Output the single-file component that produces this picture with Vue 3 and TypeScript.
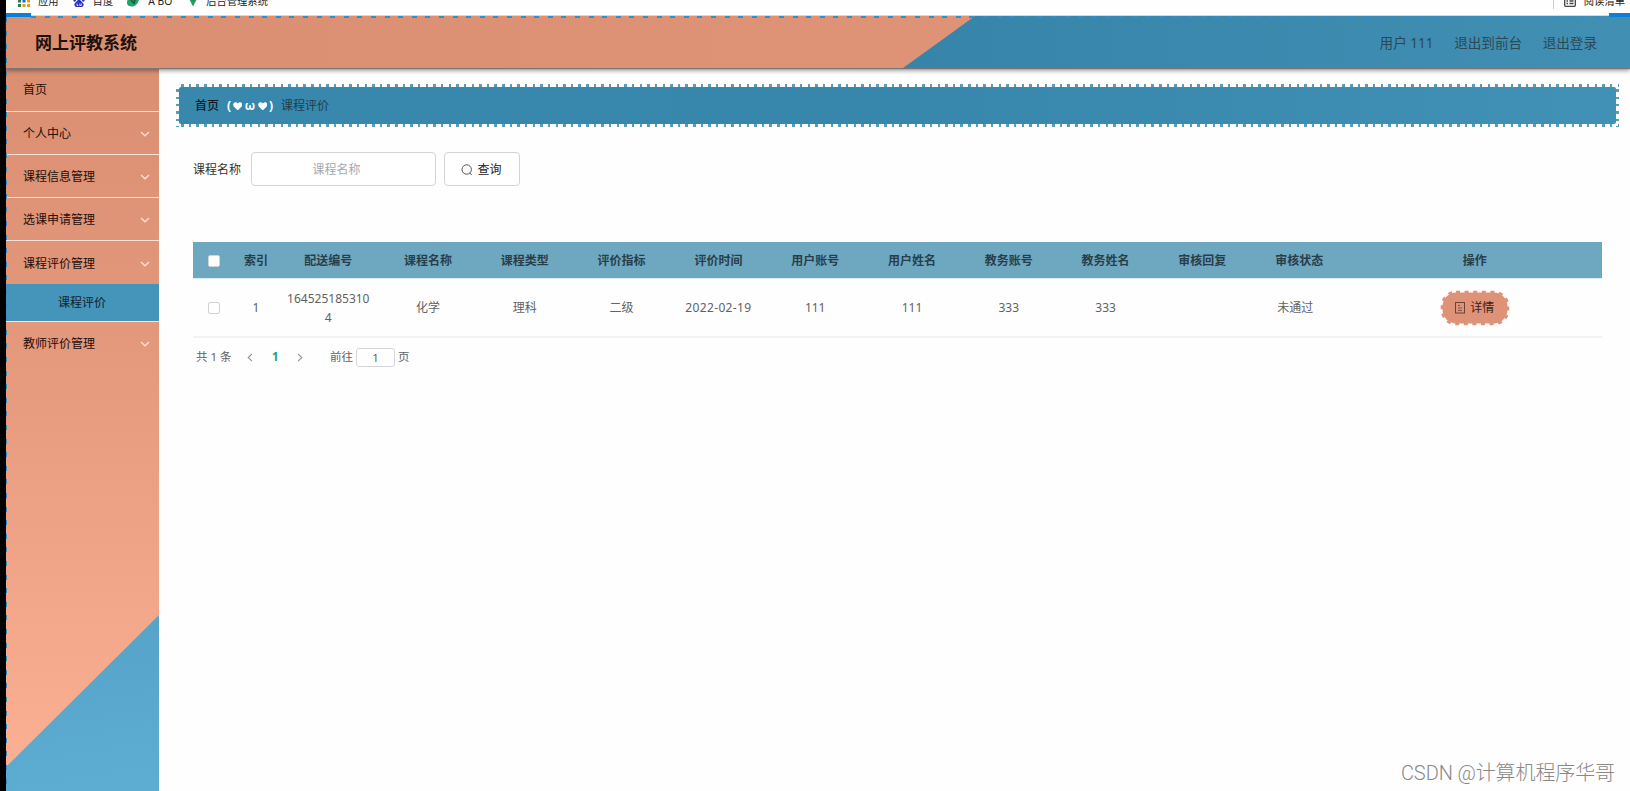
<script setup lang="ts">
interface MenuItem { label: string; expandable: boolean; child?: string }

const menu: MenuItem[] = [
  { label: '首页', expandable: false },
  { label: '个人中心', expandable: true },
  { label: '课程信息管理', expandable: true },
  { label: '选课申请管理', expandable: true },
  { label: '课程评价管理', expandable: true, child: '课程评价' },
  { label: '教师评价管理', expandable: true },
]

const columns: string[] = [
  '索引', '配送编号', '课程名称', '课程类型', '评价指标', '评价时间', '用户账号',
  '用户姓名', '教务账号', '教务姓名', '审核回复', '审核状态', '操作',
]

const rows: string[][] = [
  ['1', '1645251853104', '化学', '理科', '二级', '2022-02-19', '111', '111', '333', '333', '', '未通过'],
]
</script>

<template>
  <div class="screen">
    <div class="edge"></div>
    <div class="window">
      <div class="bookmarks">
        <span class="mark m1">
          <svg width="12" height="12" viewBox="0 0 12 12">
            <g fill="#2f7d4a"><rect x="0" y="0" width="3" height="3" /><rect x="0" y="4.5" width="3" height="3" /></g>
            <g fill="#2266c8"><rect x="4.5" y="4.5" width="3" height="3" /><rect x="4.5" y="0" width="3" height="3" /></g>
            <g fill="#d9a21b"><rect x="9" y="0" width="3" height="3" /><rect x="9" y="4.5" width="3" height="3" /><rect x="4.5" y="9" width="3" height="3" /><rect x="9" y="9" width="3" height="3" /></g>
            <rect x="0" y="9" width="3" height="3" fill="#2f7d4a" />
          </svg>应用
        </span>
        <span class="mark m2">
          <svg width="12" height="12" viewBox="0 0 12 12" fill="#2b2fc4">
            <ellipse cx="1.7" cy="5" rx="1.4" ry="1.8" /><ellipse cx="4.2" cy="2" rx="1.3" ry="1.8" />
            <ellipse cx="7.8" cy="2" rx="1.3" ry="1.8" /><ellipse cx="10.3" cy="5" rx="1.4" ry="1.8" />
            <path d="M6 4.6C4 5 3.500 7 1.800 8.200C.8 9.500 1.500 12 3.500 12H8.500C10.500 12 11.200 9.500 10.200 8.200C8.500 7 8 5 6 4.600Z" />
            <path d="M4 8.500V10.500H5.300M6.800 8.500V10.500H8.300V8.500" fill="none" stroke="#fff" stroke-width=".8" />
          </svg>百度
        </span>
        <span class="mark m3">
          <svg width="13" height="12" viewBox="0 0 13 12">
            <path d="M0 8C0 2 5 0 12 0C13 7 9 12 4 11.500C1.500 11.200 0 10 0 8Z" fill="#26a269" />
            <path d="M4 5L7 8L8.500 3" fill="none" stroke="#165c3c" stroke-width="1.500" />
          </svg>A BO
        </span>
        <span class="mark m4">
          <svg width="12" height="12" viewBox="0 0 12 12">
            <path d="M1 2L6 11.500L11 2Z" fill="#2a9d60" /><path d="M4 2L6 6L8 2Z" fill="#2f5366" />
          </svg>后台管理系统
        </span>
        <span class="mark reading">
          <svg width="12" height="12" viewBox="0 0 12 12" fill="none" stroke="#444" stroke-width="1.300">
            <rect x=".7" y=".7" width="10.600" height="10.600" rx="1" />
            <path d="M2.500 3.500H4M5.500 3.500H9.500M2.500 6H4M5.500 6H9.500M2.500 8.500H4M5.500 8.500H9.500" />
          </svg>阅读清单
        </span>
      </div>

      <header class="topbar">
        <h1>网上评教系统</h1>
        <nav><span>用户 111</span><span>退出到前台</span><span>退出登录</span></nav>
      </header>

      <div class="body">
        <aside>
          <template v-for="item in menu" :key="item.label">
            <div class="item" :class="{ open: item.child }">
              <span>{{ item.label }}</span>
              <svg v-if="item.expandable" width="10" height="6" viewBox="0 0 10 6" fill="none" stroke="#f6e3dc" stroke-width="1.200">
                <path d="M1 1L5 4.800L9 1" />
              </svg>
            </div>
            <div v-if="item.child" class="child">{{ item.child }}</div>
          </template>
        </aside>

        <main>
          <div class="crumb">
            <div class="crumb-in">
              <b>首页</b>
              <span class="face">(<svg viewBox="0 0 10 9"><path d="M5 9L.8 4.800C-1.200 2.300 1.800-1.600 5 1.500C8.200-1.600 11.200 2.300 9.200 4.800Z" /></svg><i>ω</i><svg viewBox="0 0 10 9"><path d="M5 9L.8 4.800C-1.200 2.300 1.800-1.600 5 1.500C8.200-1.600 11.200 2.300 9.200 4.800Z" /></svg>)</span>
              <span class="here">课程评价</span>
            </div>
          </div>

          <form class="search" @submit.prevent>
            <label>课程名称</label>
            <input type="text" placeholder="课程名称" />
            <button type="submit">
              <svg width="12" height="12" viewBox="0 0 12 12" fill="none" stroke="#555" stroke-width="1">
                <circle cx="5.700" cy="5.500" r="4.700" /><path d="M8.800 8.900L10.800 11" />
              </svg>查询
            </button>
          </form>

          <section class="table">
            <div class="row head">
              <div><span class="check"></span></div>
              <div v-for="c in columns" :key="c">{{ c }}</div>
            </div>
            <div v-for="r in rows" :key="r[1]" class="row data">
              <div><span class="check"></span></div>
              <div v-for="(v, i) in r" :key="i" :class="{ date: i === 5, status: i === 11 }">{{ v }}</div>
              <div>
                <button class="detail">
                  <svg class="scallop" width="70" height="36" viewBox="0 0 70 36">
                    <rect x="2.500" y="2.500" width="65" height="31" rx="14" fill="#de9378" />
                    <rect x="2" y="2" width="66" height="32" rx="14" fill="none" stroke="#de9378" stroke-width="2.600" stroke-dasharray="4 4.610" />
                  </svg>
                  <svg class="doc" width="10" height="12" viewBox="0 0 10 12" fill="none" stroke="#6b4236" stroke-width="1">
                    <rect x=".5" y=".5" width="9" height="10.500" /><path d="M3 3.500H5M3 6H7M3 8.500H7" stroke-width=".8" />
                  </svg>
                  <span>详情</span>
                </button>
              </div>
            </div>
          </section>

          <div class="pager">
            <span class="total">共 1 条</span>
            <svg width="6" height="9" viewBox="0 0 6 9"><path d="M5 .8L1.200 4.500L5 8.200" /></svg>
            <b>1</b>
            <svg width="6" height="9" viewBox="0 0 6 9"><path d="M1 .8L4.800 4.500L1 8.200" /></svg>
            <span class="goto">前往</span>
            <span class="page">1</span>
            <span>页</span>
          </div>
        </main>
      </div>
    </div>

    <div class="dash-top"></div>
    <div class="dash-left"></div>
    <div class="tab tab-left"></div>
    <div class="tab tab-right"></div>
    <div class="watermark">CSDN @计算机程序华哥</div>
  </div>
</template>

<style>
body { margin: 0; background: #fefefe; }
</style>

<style scoped>
* { box-sizing: border-box; }
.screen {
  position: relative; display: flex; width: 1630px; height: 791px; overflow: hidden;
  background: #fefefe; color: #222; font: 12px/16px "Noto Sans", "Noto Sans CJK SC", sans-serif;
}
.edge { flex: 0 0 6px; background: #000; }
.window { flex: 1; min-width: 0; display: flex; flex-direction: column; }
.bookmarks {
  flex: 0 0 16px; height: 16px; display: flex; align-items: flex-start; overflow: hidden;
  padding-left: 12px; font-size: 10.300px; color: #222; border-bottom: 1px solid #ddd;
}
.mark { display: flex; align-items: center; gap: 8px; height: 16px; margin-top: -7px; white-space: nowrap; }
.m2 { margin-left: 14px; }
.m3 { margin-left: 14px; }
.m4 { margin-left: 15px; gap: 7px; }
.reading { margin-left: auto; padding-left: 10px; margin-right: 5px; border-left: 1px solid #ccc; }

.topbar {
  position: relative; z-index: 1; flex: 0 0 52px; display: flex; align-items: center; justify-content: space-between;
  padding: 2px 33px 0 29px;
  background: linear-gradient(90deg, #da8f73, #de9377 55%);
  box-shadow: 0 1px 1px #777, 0 3px 4px rgba(0, 0, 0, .35);
}
.topbar::before {
  content: ''; position: absolute; z-index: -1; inset: 0;
  background: linear-gradient(90deg, #3684a9 55%, #4190b4 100%);
  clip-path: polygon(969px 0, 100% 0, 100% 100%, 897px 100%);
}
h1 { margin: 0; font-size: 17px; line-height: 24px; color: #20110d; }
nav { display: flex; gap: 20.500px; font-size: 13.600px; color: #2c4856; }

.body { flex: 1; display: flex; min-height: 0; }
aside {
  flex: 0 0 153px; position: relative; z-index: 0;
  background: linear-gradient(to bottom, #da8f73 0, #e3977b 36%, #fcb094 100%);
}
aside::after {
  content: ''; position: absolute; z-index: -1; inset: 547px 0 0 0;
  background: linear-gradient(170deg, #56a2c8, #5dadd2);
  clip-path: polygon(100% 0, 100% 100%, 0 100%, 0 152px);
}
.item {
  height: 43px; padding: 2px 9px 0 17px; display: flex; align-items: center; justify-content: space-between;
  border-bottom: 1px solid #f6e2da; color: #1e0f0b;
}
.item:first-child { height: 44px; padding-top: 0; }
.item.open { border: 0; }
.item:last-child { border: 0; padding-top: 0; }
.child {
  height: 38px; display: flex; align-items: center; justify-content: center; padding: 1px 1px 0 0;
  background: #4594b9; color: #10222b; border-bottom: 1px solid #f0e6e2;
}

main { flex: 1; min-width: 0; padding: 16px 11px 0 17px; }
.crumb {
  height: 43px; padding: 3px;
  background:
    repeating-linear-gradient(90deg, transparent 0 5.200px, #5b9bb4 5.200px 7.640px) 0 0 / 100% 3px no-repeat,
    repeating-linear-gradient(90deg, transparent 0 5.200px, #5b9bb4 5.200px 7.640px) 0 100% / 100% 3px no-repeat,
    repeating-linear-gradient(180deg, transparent 0 5px, #5b9bb4 5px 7.500px) 0 0 / 3px 100% no-repeat,
    repeating-linear-gradient(180deg, transparent 0 5px, #5b9bb4 5px 7.500px) 100% 0 / 3px 100% no-repeat;
}
.crumb-in {
  height: 37px; display: flex; align-items: center; padding: 1px 0 0 16px; border-radius: 2px;
  background: linear-gradient(90deg, #3888ad, #3786ab 50%, #4190b5);
}
.crumb b { font-weight: 500; color: #0d1c24; }
.face { display: flex; align-items: center; margin: 0 8px; width: 46px; justify-content: space-between; color: #fff; font-weight: 700; }
.face svg { width: 9.500px; height: 8.500px; fill: #fff; margin: 0 -1px; }
.face i { font-style: normal; margin: 0 1px; }
.here { color: #203f4e; }

.search { display: flex; align-items: center; margin: 25px 0 0 17px; height: 34px; }
.search label { width: 57.500px; color: #333; padding-top: 1px; }
.search input {
  width: 185px; height: 34px; padding: 1px 13px 0 0; border: 1px solid #d2d4d8; border-radius: 4px; background: #fff;
  text-align: center; font: inherit; outline: 0;
}
.search input::placeholder { color: #a6a9b0; }
.search button {
  width: 76px; height: 34px; margin-left: 8px; padding: 1px 0 0; display: flex; align-items: center; justify-content: center; gap: 4px;
  border: 1px solid #d2d4d8; border-radius: 4px; background: #fff; color: #222; font: inherit;
}

.table { margin: 56px 17px 0 17px; }
.row { display: grid; grid-template-columns: 42px 42px 102.600px repeat(10, 96.800px) 1fr; align-items: center; }
.row > div { display: flex; justify-content: center; text-align: center; }
.head {
  height: 37px; padding-top: 1px; color: #283f4b; font-weight: 700; border-bottom: 1px solid #d9ebf3;
  background: #6ea7c0;
}
.data { height: 59px; padding-top: 1px; color: #606266; border-bottom: 2px solid #f2f2f3; }
.data > div:nth-child(3) { padding: 0 9px; word-break: break-all; line-height: 19.500px; }
.data > .date { letter-spacing: .35px; }
.data > .status { padding-right: 8px; }
.check { width: 12px; height: 12px; border: 1px solid #cfd2d8; border-radius: 2px; background: #fff; }
.detail {
  position: relative; width: 70px; height: 36px; padding: 0; border: 0; background: none; font: inherit; color: #3d1e15;
  display: flex; align-items: center; justify-content: center; gap: 5px;
}
.scallop { position: absolute; inset: 0; }
.doc, .detail span { position: relative; }

.pager { display: flex; align-items: center; height: 20px; margin: 9px 0 0 20px; font-size: 11.500px; color: #606266; }
.pager svg { fill: none; stroke: #8f9299; stroke-width: 1.100; }
.total { width: 51px; }
.pager b { width: 6px; margin: 0 19px; color: #1aa179; }
.goto { margin-left: 27px; }
.page { width: 39px; height: 19px; margin: 0 3px; border: 1px solid #d5d7dc; border-radius: 3px; text-align: center; line-height: 17px; }

.dash-top {
  position: absolute; z-index: 2; left: 31px; right: 21px; top: 16px; height: 1.500px;
  background: repeating-linear-gradient(90deg, #2f8fc6 0 5px, transparent 5px 13.600px);
}
.dash-left {
  position: absolute; z-index: 2; left: 6px; top: 17px; bottom: 0; width: 1px;
  background: repeating-linear-gradient(180deg, #2f8fc6 0 5px, transparent 5px 13.600px);
}
.tab { position: absolute; z-index: 3; top: 13px; height: 4px; background: #0a80dd; }
.tab-left { left: 6px; width: 25px; }
.tab-right { right: 0; width: 21px; }
.watermark {
  position: absolute; right: 15px; top: 759px; font-size: 20px; line-height: 28px; color: #888; font-weight: 300;
  font-family: Roboto, "Noto Sans CJK SC", sans-serif; white-space: nowrap; letter-spacing: -.1px;
}
</style>
